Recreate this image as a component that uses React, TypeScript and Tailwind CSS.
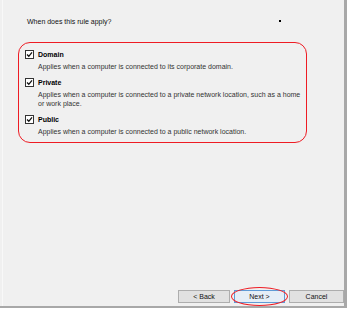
import React from 'react';

function CheckBox() {
  return (
    <div className="w-[9px] h-[9px] border border-[#333333] bg-white flex items-center justify-center shrink-0">
      <svg width="7" height="7" viewBox="0 0 7 7">
        <path d="M1 3.5 L2.8 5.3 L6 1.3" fill="none" stroke="#111111" strokeWidth="1.3" />
      </svg>
    </div>
  );
}

function Option({ label, desc }: { label: string; desc: string[] }) {
  return (
    <div>
      <div className="flex items-center gap-[4px] h-[10px]">
        <CheckBox />
        <span className="font-bold text-[#000000]">{label}</span>
      </div>
      <div className="ml-[13px] mt-[3px] text-[#333333]">
        {desc.map((d) => (
          <div key={d} className="h-[9px] leading-[9px]">{d}</div>
        ))}
      </div>
    </div>
  );
}

export default function App() {
  return (
    <div
      className="w-[350px] h-[310px] bg-white text-[7px] leading-[9px]"
      style={{ fontFamily: '"Liberation Sans", Arial, sans-serif' }}
    >
      <div className="w-[347px] h-[308px] border-r-[3px] border-b-[2px] border-[#a8a8a8] bg-[#f0f0f0] flex flex-col pl-[2px]">
        <div className="flex-1 flex flex-col bg-[#f0f0f0] border-l border-[#f8f8f8]">
          {/* heading */}
          <div className="flex items-center h-[10px] mt-[16px] pl-[24px] text-[#111111]">
            <span>When does this rule apply?</span>
            <span className="ml-[168px] w-[2px] h-[2px] bg-black" />
          </div>

          {/* options */}
          <div className="ml-[15px] mt-[16px] w-[289px] h-[101px] border-[1.5px] border-[#ee1c24] rounded-[12px] pt-[6px] pl-[6px] flex flex-col gap-[6px]">
            <Option label="Domain" desc={['Applies when a computer is connected to its corporate domain.']} />
            <Option
              label="Private"
              desc={[
                'Applies when a computer is connected to a private network location, such as a home',
                'or work place.',
              ]}
            />
            <Option label="Public" desc={['Applies when a computer is connected to a public network location.']} />
          </div>

          <div className="flex-1" />

          {/* buttons */}
          <div className="flex justify-end gap-[4px] mb-[3px] text-[#111111]">
            <button className="w-[52px] h-[13px] bg-[#e1e1e1] border border-[#adadad] leading-[11px]">&lt; Back</button>
            <div className="relative">
              <button className="w-[51px] h-[13px] bg-[#e5eef7] border border-[#5f9bd6] leading-[11px]">Next &gt;</button>
              <div className="absolute left-[-3px] top-[-3px] w-[57px] h-[19px] border-[1.5px] border-[#ee1c24] rounded-[50%]" />
            </div>
            <button className="w-[55px] h-[13px] bg-[#e1e1e1] border border-[#adadad] leading-[11px]">Cancel</button>
          </div>
        </div>
      </div>
    </div>
  );
}
